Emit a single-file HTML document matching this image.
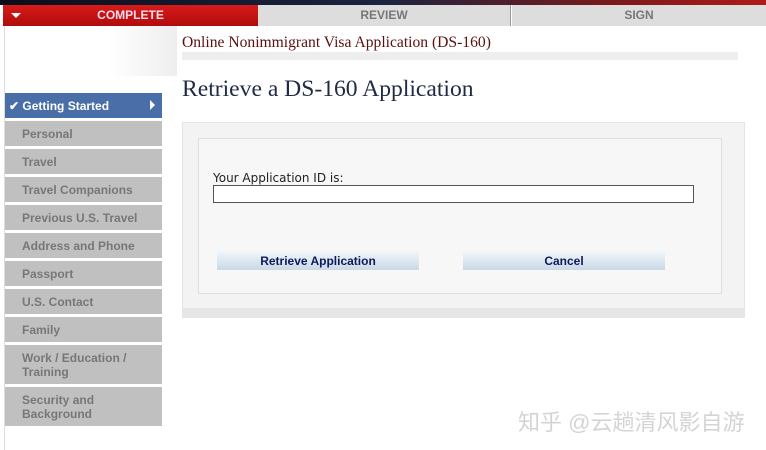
<!DOCTYPE html>
<html><head><meta charset="utf-8"><style>
*{margin:0;padding:0;box-sizing:border-box}
body{width:766px;height:450px;background:#fff;position:relative;overflow:hidden;font-family:"Liberation Sans",Arial,sans-serif}
.abs{position:absolute}
.top{left:0;top:0;width:766px;height:5px;background:linear-gradient(90deg,#0a0e1a 0%,#1b2440 50%,#7a1a1a 80%,#b01a1a 100%)}
.tab{top:5px;height:21px;font-weight:bold;font-size:12px;line-height:21px;text-align:center;color:#777;background:#ddd}
.side{left:5px;width:157px;background:#c0c0c0;color:#777;font-weight:bold;font-size:12px;padding-left:17px;line-height:14px}
.btn{height:20px;width:202px;background:linear-gradient(#f4f8fb,#c9d9e6);color:#0f1a5a;font-weight:bold;font-size:12px;text-align:center;line-height:22px}
</style></head><body>
<div class="abs top"></div>
<div class="abs tab" style="left:3px;width:255px;background:linear-gradient(#d81a1a,#b00c0c);color:#fde;">COMPLETE</div>
<div class="abs" style="left:11px;top:13px;width:0;height:0;border-left:5px solid transparent;border-right:5px solid transparent;border-top:5px solid #fff"></div>
<div class="abs tab" style="left:258px;width:253px;border-right:1px solid #999">REVIEW</div>
<div class="abs tab" style="left:512px;width:254px">SIGN</div>
<div class="abs" style="left:4px;top:26px;width:1px;height:424px;background:#ddd"></div>
<div class="abs" style="left:5px;top:26px;width:172px;height:50px;background:linear-gradient(90deg,#fff 60%,#eee)"></div>
<div class="abs" style="left:182px;top:34px;font-family:'Liberation Serif',serif;font-size:15.6px;color:#5a1010">Online Nonimmigrant Visa Application (DS-160)</div>
<div class="abs" style="left:182px;top:52px;width:556px;height:8px;background:#eee"></div>
<div class="abs" style="left:182px;top:76px;font-family:'Liberation Serif',serif;font-size:23.6px;color:#1f2a44">Retrieve a DS-160 Application</div>

<div class="abs side" style="top:93px;height:25px;background:#4a6fa8;color:#fff;line-height:26px;padding-left:4px">✔ Getting Started</div>
<div class="abs" style="left:150px;top:100px;border-top:5px solid transparent;border-bottom:5px solid transparent;border-left:5px solid #fff"></div>
<div class="abs side" style="top:121px;height:25px;line-height:26px">Personal</div>
<div class="abs side" style="top:149px;height:25px;line-height:26px">Travel</div>
<div class="abs side" style="top:177px;height:25px;line-height:26px">Travel Companions</div>
<div class="abs side" style="top:205px;height:25px;line-height:26px">Previous U.S. Travel</div>
<div class="abs side" style="top:233px;height:25px;line-height:26px">Address and Phone</div>
<div class="abs side" style="top:261px;height:25px;line-height:26px">Passport</div>
<div class="abs side" style="top:289px;height:25px;line-height:26px">U.S. Contact</div>
<div class="abs side" style="top:317px;height:25px;line-height:26px">Family</div>
<div class="abs side" style="top:345px;height:39px;padding-top:6px">Work / Education /<br>Training</div>
<div class="abs side" style="top:387px;height:39px;padding-top:6px">Security and<br>Background</div>

<div class="abs" style="left:182px;top:122px;width:563px;height:196px;background:#f3f3f3;border:1px solid #e4e4e4"></div>
<div class="abs" style="left:182px;top:308px;width:563px;height:10px;background:#e6e6e6"></div>
<div class="abs" style="left:198px;top:138px;width:524px;height:156px;background:#f7f7f7;border:1px solid #ddd"></div>
<div class="abs" style="left:213px;top:171px;font-family:'DejaVu Sans',sans-serif;font-size:12px;color:#222">Your Application ID is:</div>
<div class="abs" style="left:213px;top:185px;width:481px;height:18px;background:#fff;border:1px solid #555"></div>
<div class="abs btn" style="left:217px;top:250px">Retrieve Application</div>
<div class="abs btn" style="left:463px;top:250px">Cancel</div>
<div class="abs" style="left:518px;top:405px;font-family:'Liberation Sans','Noto Sans CJK SC',sans-serif;font-size:22px;color:#d4d4d4">知乎 @云趟清风影自游</div>
</body></html>
